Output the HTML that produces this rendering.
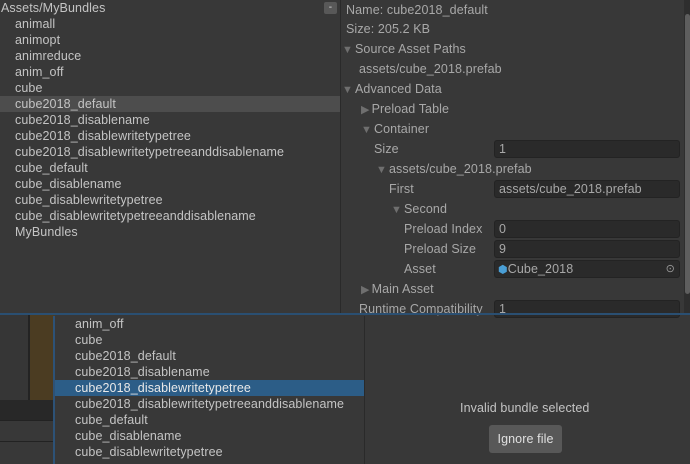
<!DOCTYPE html>
<html><head><style>
*{margin:0;padding:0;box-sizing:border-box}
body{width:690px;height:464px;background:#383838;font-family:"Liberation Sans",sans-serif;font-size:12.5px;letter-spacing:0.1px;color:#c4c4c4;position:relative;overflow:hidden}
.a{position:absolute;white-space:nowrap}
.r{position:absolute;height:16px;line-height:16px;white-space:nowrap}
.f{position:absolute;left:494px;width:186px;height:18px;background:#2a2a2a;border:1px solid #232323;border-radius:3px;line-height:16px;padding-left:4px;color:#a8a8a8}
.l{position:absolute;height:20px;line-height:20px;white-space:nowrap;color:#a8a8a8}
.tri{font-size:11px;color:#6f6f6f;margin-right:2px}
</style></head><body>
<div class="a" style="left:0;top:0;width:340px;height:314px;background:#383838"></div>
<div class="a" style="left:0;top:96px;width:340px;height:16px;background:#4d4d4d"></div>
<div class="r" style="left:1px;top:0">Assets/MyBundles</div>
<div class="a" style="left:324px;top:2px;width:13px;height:12px;background:#585858;border-radius:2px;color:#ddd;font-size:10px;line-height:11px;text-align:center">-</div>
<div class="r" style="left:15px;top:16px">animall</div>
<div class="r" style="left:15px;top:32px">animopt</div>
<div class="r" style="left:15px;top:48px">animreduce</div>
<div class="r" style="left:15px;top:64px">anim_off</div>
<div class="r" style="left:15px;top:80px">cube</div>
<div class="r" style="left:15px;top:96px">cube2018_default</div>
<div class="r" style="left:15px;top:112px">cube2018_disablename</div>
<div class="r" style="left:15px;top:128px">cube2018_disablewritetypetree</div>
<div class="r" style="left:15px;top:144px">cube2018_disablewritetypetreeanddisablename</div>
<div class="r" style="left:15px;top:160px">cube_default</div>
<div class="r" style="left:15px;top:176px">cube_disablename</div>
<div class="r" style="left:15px;top:192px">cube_disablewritetypetree</div>
<div class="r" style="left:15px;top:208px">cube_disablewritetypetreeanddisablename</div>
<div class="r" style="left:15px;top:224px">MyBundles</div>
<div class="a" style="left:340px;top:0;width:1px;height:314px;background:#2a2a2a"></div>
<div class="l" style="left:346px;top:0">Name: cube2018_default</div>
<div class="l" style="left:346px;top:19px">Size: 205.2 KB</div>
<div class="l" style="left:342px;top:39px"><span class="tri">▼</span>Source Asset Paths</div>
<div class="l" style="left:359px;top:59px">assets/cube_2018.prefab</div>
<div class="l" style="left:342px;top:79px"><span class="tri">▼</span>Advanced Data</div>
<div class="l" style="left:361px;top:99px"><span class="tri">▶</span>Preload Table</div>
<div class="l" style="left:361px;top:119px"><span class="tri">▼</span>Container</div>
<div class="l" style="left:374px;top:139px">Size</div><div class="f" style="top:140px">1</div>
<div class="l" style="left:376px;top:159px"><span class="tri">▼</span>assets/cube_2018.prefab</div>
<div class="l" style="left:389px;top:179px">First</div><div class="f" style="top:180px">assets/cube_2018.prefab</div>
<div class="l" style="left:391px;top:199px"><span class="tri">▼</span>Second</div>
<div class="l" style="left:404px;top:219px">Preload Index</div><div class="f" style="top:220px">0</div>
<div class="l" style="left:404px;top:239px">Preload Size</div><div class="f" style="top:240px">9</div>
<div class="l" style="left:404px;top:259px">Asset</div><div class="f" style="top:260px;padding-left:3px"><span style="color:#4a9fd6;font-size:11px">⬢</span>Cube_2018<span style="position:absolute;right:4px;top:0;font-size:11px;color:#999">⊙</span></div>
<div class="l" style="left:361px;top:279px"><span class="tri">▶</span>Main Asset</div>
<div class="l" style="left:359px;top:299px">Runtime Compatibility</div><div class="f" style="top:300px">1</div>
<div class="a" style="left:684px;top:0;width:6px;height:314px;background:#2e2e2e"></div>
<div class="a" style="left:685px;top:14px;width:5px;height:280px;background:#5e5e5e;border-radius:3px"></div>
<div class="a" style="left:0;top:313px;width:690px;height:2px;background:#2a4f72"></div>
<div class="a" style="left:0;top:315px;width:28px;height:85px;background:#363636"></div>
<div class="a" style="left:28px;top:315px;width:2px;height:85px;background:#232323"></div>
<div class="a" style="left:30px;top:315px;width:25px;height:85px;background:#4b3c22"></div>
<div class="a" style="left:0;top:400px;width:55px;height:20px;background:#282828"></div>
<div class="a" style="left:0;top:420px;width:55px;height:1px;background:#222"></div>
<div class="a" style="left:0;top:441px;width:55px;height:1px;background:#222"></div>
<div class="a" style="left:53px;top:316px;width:2px;height:148px;background:#2d5277"></div>
<div class="a" style="left:55px;top:316px;width:309px;height:148px;background:#383838"></div>
<div class="a" style="left:55px;top:380px;width:309px;height:16px;background:#2c5d87"></div>
<div class="r" style="left:75px;top:316px">anim_off</div>
<div class="r" style="left:75px;top:332px">cube</div>
<div class="r" style="left:75px;top:348px">cube2018_default</div>
<div class="r" style="left:75px;top:364px">cube2018_disablename</div>
<div class="r" style="left:75px;top:380px;color:#e8e8e8">cube2018_disablewritetypetree</div>
<div class="r" style="left:75px;top:396px">cube2018_disablewritetypetreeanddisablename</div>
<div class="r" style="left:75px;top:412px">cube_default</div>
<div class="r" style="left:75px;top:428px">cube_disablename</div>
<div class="r" style="left:75px;top:444px">cube_disablewritetypetree</div>
<div class="a" style="left:364px;top:316px;width:1px;height:148px;background:#2a2a2a"></div>
<div class="a" style="left:460px;top:401px">Invalid bundle selected</div>
<div class="a" style="left:489px;top:425px;width:73px;height:28px;background:#585858;border-radius:3px;text-align:center;line-height:28px;color:#e0e0e0">Ignore file</div>
</body></html>
